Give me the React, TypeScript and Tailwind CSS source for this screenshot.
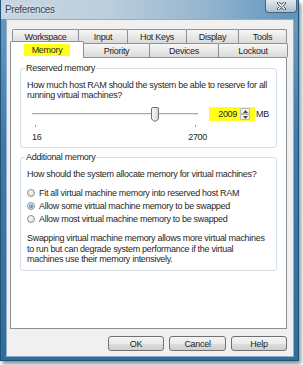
import React from "react";

const ui = "font-['Liberation_Sans',Arial,sans-serif] text-[9px] tracking-[-0.3px] text-[#1f1f1f]";

function Tab({ label, className }: { label: string; className: string }) {
  return (
    <div
      className={`flex h-[14px] items-center justify-center -ml-px first:ml-0 rounded-t-[2px] border border-b-0 border-[#8c9097] bg-gradient-to-b from-[#f7f7f7] to-[#dadada] leading-[12px] ${className}`}
    >
      {label}
    </div>
  );
}

function Radio({ label, checked = false }: { label: string; checked?: boolean }) {
  return (
    <div className="flex h-[10px] items-center gap-[4px] leading-[10px]">
      <span className="flex h-[8px] w-[8px] items-center justify-center rounded-full border border-[#8f9192] bg-[radial-gradient(circle_at_40%_35%,#fafafa,#cfd2d4)]">
        {checked && (
          <span className="h-[4px] w-[4px] rounded-full bg-[radial-gradient(circle_at_40%_35%,#9cc9f0,#1c5fa8)]" />
        )}
      </span>
      <span>{label}</span>
    </div>
  );
}

function Button({ label, className }: { label: string; className: string }) {
  return (
    <button
      className={`flex h-[15px] items-center justify-center rounded-[3px] border border-[#707070] bg-[linear-gradient(180deg,#f4f4f4_0%,#ebebeb_50%,#dddddd_50%,#cfcfcf_100%)] leading-[12px] ${className}`}
    >
      {label}
    </button>
  );
}

export default function App() {
  return (
    <div className={`h-[365px] w-[303px] overflow-hidden bg-white ${ui}`}>
      <div className="flex h-[361px] w-[299px] flex-col border border-t-0 border-[#20527a] bg-[linear-gradient(180deg,#6f9cc0_0%,#3d7bab_40%,#2f6d9b_100%)] shadow-[2px_3px_4px_rgba(0,0,0,0.45)]">
        {/* Title bar */}
        <div className="flex h-[19px] shrink-0 items-start justify-between bg-[linear-gradient(90deg,#c8d6e1_0%,#bccfdd_35%,#93b4ce_70%,#5e93bb_100%)]">
          <span className="pl-[4px] pt-[4px] text-[10px] leading-[12px] tracking-[-0.4px] text-[#3c4852] [text-shadow:0_0_5px_rgba(255,255,255,0.9)]">
            Preferences
          </span>
          <div className="mr-[1px] flex h-[13px] w-[32px] items-center justify-center rounded-b-[4px] border border-t-0 border-[#4d6478] bg-[linear-gradient(180deg,#e2eaf0_0%,#c5d4df_50%,#a9bfce_100%)]">
            <svg width="9" height="8" viewBox="0 0 9 8">
              <path d="M1.5 1 L7.5 7 M7.5 1 L1.5 7" stroke="#3a4a58" strokeWidth="3" strokeLinecap="round" />
              <path d="M1.5 1 L7.5 7 M7.5 1 L1.5 7" stroke="#ffffff" strokeWidth="1.4" strokeLinecap="round" />
            </svg>
          </div>
        </div>

        {/* Client area */}
        <div className="mb-[3px] ml-[5px] mr-[4px] flex flex-1 flex-col border border-[#8fb0c8] bg-[#f0f0f0] pl-[3px] pt-[9px]">
          {/* Tabs */}
          <div className="flex h-[14px] pl-[2px]">
            <Tab label="Workspace" className="w-[67px]" />
            <Tab label="Input" className="w-[50px]" />
            <Tab label="Hot Keys" className="w-[60px]" />
            <Tab label="Display" className="w-[53px]" />
            <Tab label="Tools" className="w-[49px]" />
          </div>
          <div className="flex h-[14px] items-start">
            <div className="relative z-10 -mt-[2px] flex h-[17px] w-[74px] items-center justify-center rounded-t-[2px] border border-b-0 border-[#8c9097] bg-white pb-[1px]">
              <span className="bg-[#ffff1a] px-[8px] leading-[12px]">Memory</span>
            </div>
            <Tab label="Priority" className="w-[67px] -ml-px" />
            <Tab label="Devices" className="w-[70px]" />
            <Tab label="Lockout" className="w-[70px]" />
          </div>

          {/* Panel */}
          <div className="flex h-[272px] w-[277px] flex-col border border-[#8c9097] bg-white px-[9px]">
            <fieldset className="mt-[5px] rounded-[3px] border border-[#d5dfe5] px-[6px] pb-[5px] pt-[7px]">
              <legend className="-ml-[2px] px-[1px] leading-[10px]">Reserved memory</legend>
              <p className="leading-[10px]">
                How much host RAM should the system be able to reserve for all running virtual machines?
              </p>
              <div className="mt-[4px] flex h-[20px] items-center">
                <div className="relative ml-[5px] h-[20px] w-[166px]">
                  <div className="absolute left-0 right-0 top-[9px] h-[2px] border-t border-[#a8a8a8] bg-[#e8eaeb]" />
                  <svg className="absolute left-[119px] top-[3px]" width="8" height="15" viewBox="0 0 8 15">
                    <defs>
                      <linearGradient id="th" x1="0" y1="0" x2="1" y2="0">
                        <stop offset="0" stopColor="#fbfbfb" />
                        <stop offset="1" stopColor="#d6d6d6" />
                      </linearGradient>
                    </defs>
                    <path
                      d="M0.5 2 Q0.5 0.5 2 0.5 H6 Q7.5 0.5 7.5 2 V11 Q7.5 12 6.5 13 L4 14.5 L1.5 13 Q0.5 12 0.5 11 Z"
                      fill="url(#th)"
                      stroke="#707070"
                    />
                  </svg>
                </div>
                <div className="ml-[11px] flex h-[14px] w-[46px] items-center justify-end bg-[#ffff1a] pr-[5px]">
                  <span className="leading-[10px]">2009</span>
                  <div className="ml-[3px] flex h-[12px] w-[10px] flex-col justify-between">
                    <div className="flex h-[6px] items-center justify-center rounded-t-[1px] border border-[#b9b9b9] bg-[#f1f1f1]">
                      <svg width="5" height="3" viewBox="0 0 5 3">
                        <path d="M0 3 L2.5 0 L5 3 Z" fill="#4a4a4a" />
                      </svg>
                    </div>
                    <div className="-mt-px flex h-[6px] items-center justify-center rounded-b-[1px] border border-[#b9b9b9] bg-[#f1f1f1]">
                      <svg width="5" height="3" viewBox="0 0 5 3">
                        <path d="M0 0 L2.5 3 L5 0 Z" fill="#4a4a4a" />
                      </svg>
                    </div>
                  </div>
                </div>
                <span className="ml-[1px] leading-[10px]">MB</span>
              </div>
              <div className="ml-[8px] flex h-[4px] w-[161px] items-center justify-between">
                <span className="h-[2px] w-px bg-[#9a9a9a]" />
                <span className="h-[2px] w-px bg-[#9a9a9a]" />
              </div>
              <div className="ml-[5px] mt-[4px] flex w-[175px] justify-between leading-[10px]">
                <span>16</span>
                <span>2700</span>
              </div>
            </fieldset>

            <fieldset className="mt-[4px] rounded-[3px] border border-[#d5dfe5] px-[6px] pb-[5px] pt-[7px]">
              <legend className="-ml-[2px] px-[1px] leading-[10px]">Additional memory</legend>
              <p className="leading-[10px]">How should the system allocate memory for virtual machines?</p>
              <div className="mt-[9px] flex flex-col gap-[3px]">
                <Radio label="Fit all virtual machine memory into reserved host RAM" />
                <Radio label="Allow some virtual machine memory to be swapped" checked />
                <Radio label="Allow most virtual machine memory to be swapped" />
              </div>
              <p className="mt-[9px] leading-[10.5px]">
                Swapping virtual machine memory allows more virtual machines to run but can degrade system performance if the virtual machines use their memory intensively.
              </p>
            </fieldset>
          </div>

          {/* Buttons */}
          <div className="mt-[7px] flex justify-end gap-[5px] pr-[6px]">
            <Button label="OK" className="w-[56px]" />
            <Button label="Cancel" className="w-[57px]" />
            <Button label="Help" className="w-[56px]" />
          </div>
        </div>
      </div>
    </div>
  );
}
